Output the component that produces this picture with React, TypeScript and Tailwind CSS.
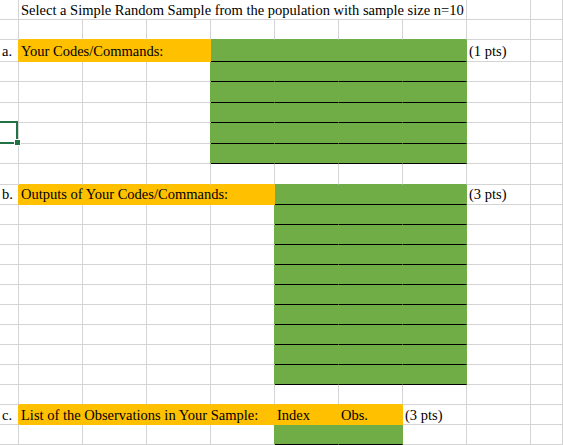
type Fill = "o" | "g" | undefined;

type Seg = { from: number; to: number; text?: string };

const COLS = [19, 64, 64, 64, 64, 64, 64, 64, 64, 32];
const ROWS = [20, 20, 22, 20, 21, 20, 21, 20, 21, 20, 20, 20, 20, 20, 20, 20, 20, 20, 20, 20, 20, 20];

const GRID = "#d4d4d4";
const ORANGE = "#ffc000";
const GREEN = "#70ad47";

// which cells carry a fill
const fillAt = (r: number, c: number): Fill => {
  if (r === 2) return c >= 1 && c <= 3 ? "o" : c >= 4 && c <= 7 ? "g" : undefined;
  if (r >= 3 && r <= 7) return c >= 4 && c <= 7 ? "g" : undefined;
  if (r === 9) return c >= 1 && c <= 4 ? "o" : c >= 5 && c <= 7 ? "g" : undefined;
  if (r >= 10 && r <= 18) return c >= 5 && c <= 7 ? "g" : undefined;
  if (r === 20) return c >= 1 && c <= 6 ? "o" : undefined;
  if (r === 21) return c >= 5 && c <= 6 ? "g" : undefined;
  return undefined;
};

const TEXT_ROWS: Record<number, Seg[]> = {
  0: [
    { from: 0, to: 0 },
    { from: 1, to: 7, text: "Select a Simple Random Sample from the population with sample size n=10" },
    { from: 8, to: 8 },
    { from: 9, to: 9 },
  ],
  2: [
    { from: 0, to: 0, text: "a." },
    { from: 1, to: 3, text: "Your Codes/Commands:" },
    { from: 4, to: 7 },
    { from: 8, to: 8, text: "(1 pts)" },
    { from: 9, to: 9 },
  ],
  9: [
    { from: 0, to: 0, text: "b." },
    { from: 1, to: 4, text: "Outputs of Your Codes/Commands:" },
    { from: 5, to: 7 },
    { from: 8, to: 8, text: "(3 pts)" },
    { from: 9, to: 9 },
  ],
  20: [
    { from: 0, to: 0, text: "c." },
    { from: 1, to: 4, text: "List of the Observations in Your Sample:" },
    { from: 5, to: 5, text: "Index" },
    { from: 6, to: 6, text: "Obs." },
    { from: 7, to: 7, text: "(3 pts)" },
    { from: 8, to: 8 },
    { from: 9, to: 9 },
  ],
};

const colorOf = (f: Fill) => (f === "o" ? ORANGE : f === "g" ? GREEN : undefined);

const Row = ({ r }: { r: number }) => {
  const segs: Seg[] = TEXT_ROWS[r] ?? COLS.map((_, c) => ({ from: c, to: c }));
  const lift = r === 2 || r === 9 ? "pb-[1px]" : "";

  return (
    <div className="flex">
      {segs.map((s, i) => {
        const fill = fillAt(r, s.from);
        const next = segs[i + 1] ? fillAt(r, segs[i + 1].from) : undefined;
        const below = fillAt(r + 1, s.from);
        const width = COLS.slice(s.from, s.to + 1).reduce((a, b) => a + b, 0);

        const bg = colorOf(fill) ?? "#ffffff";
        const right = colorOf(fill) ?? colorOf(next) ?? GRID;
        const bottom = fill === "g" ? "#000000" : colorOf(fill) ?? colorOf(below) ?? GRID;
        const selected = r === 6 && s.from === 0;

        return (
          <div
            key={i}
            className={`relative flex shrink-0 items-end border-r border-b px-[2px] ${lift}`}
            style={{ width, height: ROWS[r], background: bg, borderRightColor: right, borderBottomColor: bottom }}
          >
            {s.text && (
              <span className="whitespace-nowrap font-['Liberation_Serif',serif] text-[14.5px] leading-[18px] text-black">
                {s.text}
              </span>
            )}
            {selected && (
              <>
                <div className="absolute -top-[2px] -left-[4px] right-0 -bottom-[1px] z-10 border-2 border-[#217346]" />
                <div className="absolute -right-[3px] -bottom-[3px] z-10 h-[7px] w-[7px] border border-white bg-[#217346]" />
              </>
            )}
          </div>
        );
      })}
    </div>
  );
};

export default function App() {
  return (
    <main className="h-[445px] w-[563px] overflow-hidden bg-white font-serif">
      {ROWS.map((_, r) => (
        <Row key={r} r={r} />
      ))}
    </main>
  );
}
